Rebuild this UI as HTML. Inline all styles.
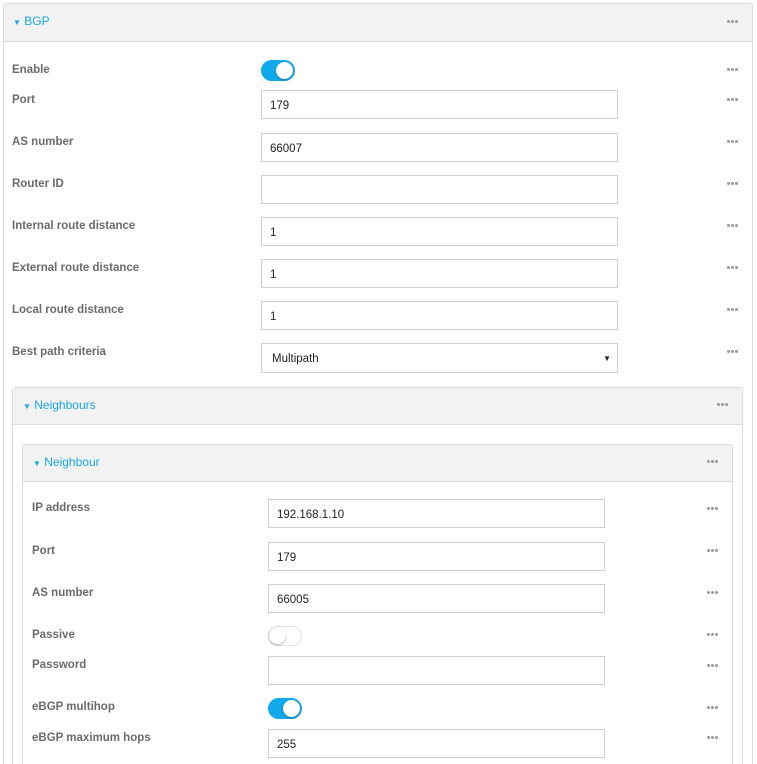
<!DOCTYPE html>
<html style="height:764px;overflow:hidden"><head><style>
body{margin:0;width:757px;height:764px;background:#fff;position:relative;overflow:hidden;font-family:"Liberation Sans",sans-serif}
.panel{position:absolute;border:1px solid #dcdcdc;border-radius:3px;background:#fff}
.hdr{position:absolute;background:#f2f2f2;border-bottom:1px solid #dcdcdc}
.ttl{position:absolute;color:#1aa6e4;font-size:12px}
.lbl{position:absolute;color:#6b6b6b;font-size:11.5px;font-weight:bold;line-height:14px}
.inp{position:absolute;border:1px solid #cfcfcf;box-sizing:border-box;height:29px;font-size:11.5px;color:#222;padding:0 8px;line-height:30px}
.dots{position:absolute;width:12px;height:4px}
.dots i{position:absolute;top:0;width:3px;height:3px;border-radius:50%;background:#999}
.tog{position:absolute;width:34px;height:21px;border-radius:11px}
.tog i{position:absolute;top:2px;width:17px;height:17px;border-radius:50%;background:#fff;box-shadow:0 1px 2px rgba(0,0,0,.3)}
</style></head><body>
<div class="panel" style="left:3px;top:3px;width:748px;height:780px"></div>
<div class="hdr" style="left:4px;top:4px;width:748px;height:37px"></div>
<div class="ttl" style="left:13px;top:14px"><span style="font-size:8px">▼</span> BGP</div>

<div class="panel" style="left:12px;top:387px;width:729px;height:400px"></div>
<div class="hdr" style="left:13px;top:388px;width:729px;height:36px"></div>
<div class="ttl" style="left:23px;top:398px"><span style="font-size:8px">▼</span> Neighbours</div>

<div class="panel" style="left:22px;top:444px;width:709px;height:340px"></div>
<div class="hdr" style="left:23px;top:445px;width:709px;height:36px"></div>
<div class="ttl" style="left:33px;top:455px"><span style="font-size:8px">▼</span> Neighbour</div>

<div class="lbl" style="left:12px;top:63px">Enable</div>
<div class="tog" style="left:261px;top:60px;background:#0fa9ec"><i style="left:15px"></i></div>
<div class="lbl" style="left:12px;top:93px">Port</div>
<div class="inp" style="left:261px;top:90px;width:357px">179</div>
<div class="lbl" style="left:12px;top:135px">AS number</div>
<div class="inp" style="left:261px;top:133px;width:357px">66007</div>
<div class="lbl" style="left:12px;top:177px">Router ID</div>
<div class="inp" style="left:261px;top:175px;width:357px"></div>
<div class="lbl" style="left:12px;top:219px">Internal route distance</div>
<div class="inp" style="left:261px;top:217px;width:357px">1</div>
<div class="lbl" style="left:12px;top:261px">External route distance</div>
<div class="inp" style="left:261px;top:259px;width:357px">1</div>
<div class="lbl" style="left:12px;top:303px">Local route distance</div>
<div class="inp" style="left:261px;top:301px;width:357px">1</div>
<div class="lbl" style="left:12px;top:345px">Best path criteria</div>
<div class="inp" style="left:261px;top:343px;width:357px;height:30px;line-height:30px;padding-left:10px">Multipath<span style="position:absolute;right:6px;font-size:8px">▼</span></div>

<div class="lbl" style="left:32px;top:501px">IP address</div>
<div class="inp" style="left:268px;top:499px;width:337px">192.168.1.10</div>
<div class="lbl" style="left:32px;top:544px">Port</div>
<div class="inp" style="left:268px;top:542px;width:337px">179</div>
<div class="lbl" style="left:32px;top:586px">AS number</div>
<div class="inp" style="left:268px;top:584px;width:337px">66005</div>
<div class="lbl" style="left:32px;top:628px">Passive</div>
<div class="tog" style="left:268px;top:626px;background:#fff;border:1px solid #e0e0e0;box-sizing:border-box;height:20px"><i style="left:0;top:0"></i></div>
<div class="lbl" style="left:32px;top:658px">Password</div>
<div class="inp" style="left:268px;top:656px;width:337px"></div>
<div class="lbl" style="left:32px;top:700px">eBGP multihop</div>
<div class="tog" style="left:268px;top:698px;background:#0fa9ec"><i style="left:15px"></i></div>
<div class="lbl" style="left:32px;top:731px">eBGP maximum hops</div>
<div class="inp" style="left:268px;top:729px;width:337px">255</div>

<div class="dots" style="left:727px;top:20px"><i style="left:0"></i><i style="left:4px"></i><i style="left:8px"></i></div>
<div class="dots" style="left:727px;top:68px"><i style="left:0"></i><i style="left:4px"></i><i style="left:8px"></i></div>
<div class="dots" style="left:727px;top:98px"><i style="left:0"></i><i style="left:4px"></i><i style="left:8px"></i></div>
<div class="dots" style="left:727px;top:140px"><i style="left:0"></i><i style="left:4px"></i><i style="left:8px"></i></div>
<div class="dots" style="left:727px;top:182px"><i style="left:0"></i><i style="left:4px"></i><i style="left:8px"></i></div>
<div class="dots" style="left:727px;top:224px"><i style="left:0"></i><i style="left:4px"></i><i style="left:8px"></i></div>
<div class="dots" style="left:727px;top:266px"><i style="left:0"></i><i style="left:4px"></i><i style="left:8px"></i></div>
<div class="dots" style="left:727px;top:308px"><i style="left:0"></i><i style="left:4px"></i><i style="left:8px"></i></div>
<div class="dots" style="left:727px;top:350px"><i style="left:0"></i><i style="left:4px"></i><i style="left:8px"></i></div>
<div class="dots" style="left:717px;top:403px"><i style="left:0"></i><i style="left:4px"></i><i style="left:8px"></i></div>
<div class="dots" style="left:707px;top:460px"><i style="left:0"></i><i style="left:4px"></i><i style="left:8px"></i></div>
<div class="dots" style="left:707px;top:507px"><i style="left:0"></i><i style="left:4px"></i><i style="left:8px"></i></div>
<div class="dots" style="left:707px;top:549px"><i style="left:0"></i><i style="left:4px"></i><i style="left:8px"></i></div>
<div class="dots" style="left:707px;top:591px"><i style="left:0"></i><i style="left:4px"></i><i style="left:8px"></i></div>
<div class="dots" style="left:707px;top:633px"><i style="left:0"></i><i style="left:4px"></i><i style="left:8px"></i></div>
<div class="dots" style="left:707px;top:664px"><i style="left:0"></i><i style="left:4px"></i><i style="left:8px"></i></div>
<div class="dots" style="left:707px;top:706px"><i style="left:0"></i><i style="left:4px"></i><i style="left:8px"></i></div>
<div class="dots" style="left:707px;top:736px"><i style="left:0"></i><i style="left:4px"></i><i style="left:8px"></i></div>
</body></html>
